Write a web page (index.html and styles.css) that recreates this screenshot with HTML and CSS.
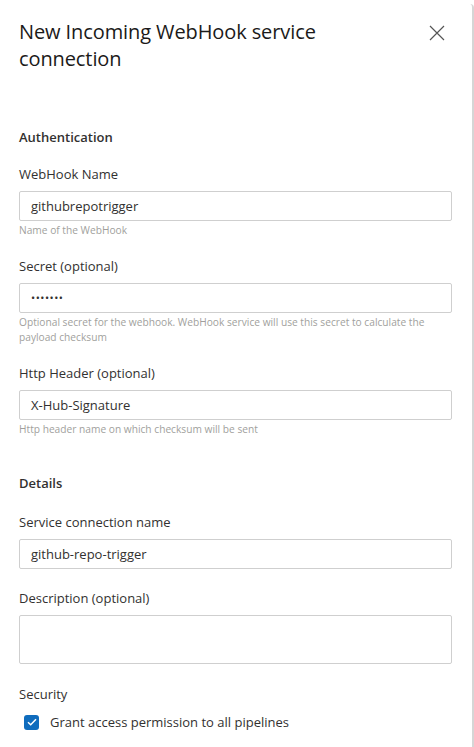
FILE: index.html
```html
<!DOCTYPE html>
<html>
<head>
<meta charset="utf-8">
<link rel="stylesheet" href="styles.css">
</head>
<body>
<div class="panel">
  <div class="header">
    <h1 class="title">New Incoming WebHook service connection</h1>
    <button class="close" aria-label="Close">
      <svg width="16" height="16" viewBox="0 0 16 16"><path d="M1 1L15 15M15 1L1 15" stroke="#555" stroke-width="1.2" fill="none"/></svg>
    </button>
  </div>

  <h2 class="section">Authentication</h2>
  <div class="field">
    <label class="label">WebHook Name</label>
    <div class="input">githubrepotrigger</div>
    <div class="help">Name of the WebHook</div>
  </div>
  <div class="field">
    <label class="label">Secret (optional)</label>
    <div class="input dots">•••••••</div>
    <div class="help">Optional secret for the webhook. WebHook service will use this secret to calculate the payload checksum</div>
  </div>
  <div class="field">
    <label class="label">Http Header (optional)</label>
    <div class="input">X-Hub-Signature</div>
    <div class="help">Http header name on which checksum will be sent</div>
  </div>

  <h2 class="section details">Details</h2>
  <div class="field first">
    <label class="label">Service connection name</label>
    <div class="input">github-repo-trigger</div>
  </div>
  <div class="field plain">
    <label class="label">Description (optional)</label>
    <div class="input textarea"></div>
  </div>
  <div class="field security">
    <label class="label">Security</label>
    <div class="check-row">
      <span class="checkbox">
        <svg width="10" height="8" viewBox="0 0 10 8"><path d="M1 4.2L3.7 6.8L9 1.2" stroke="#fff" stroke-width="1.5" fill="none"/></svg>
      </span>
      <span class="check-label">Grant access permission to all pipelines</span>
    </div>
  </div>
</div>
</body>
</html>
```

FILE: styles.css
```css
html, body {
  margin: 0;
  padding: 0;
  background: #ffffff;
}
body {
  font-family: "Open Sans", "Noto Sans", "Liberation Sans", sans-serif;
  color: #323130;
  width: 474px;
  height: 747px;
  overflow: hidden;
}
.panel {
  box-sizing: border-box;
  height: 747px;
  margin-top: 4px;
  padding: 14px 20px 0 19px;
  border-right: 2px solid #d6d6d6;
  border-top-right-radius: 4px;
}
.header {
  display: flex;
  justify-content: space-between;
  align-items: flex-start;
}
.title {
  margin: 0;
  font-size: 20px;
  font-weight: 400;
  line-height: 27px;
  color: #1b1a19;
  width: 340px;
  letter-spacing: -0.1px;
}
.close {
  border: none;
  background: none;
  padding: 0;
  margin: 7px 7px 0 0;
  width: 16px;
  height: 16px;
  display: flex;
}
.section {
  margin: 56px 0 0 0;
  font-size: 13px;
  font-weight: 600;
  line-height: 18px;
  color: #323130;
}
.section.details {
  margin-top: 37px;
}
.field {
  margin-top: 19px;
}
.field.first {
  margin-top: 21px;
}
.field.plain {
  margin-top: 20px;
}
.field.security {
  margin-top: 21px;
}
.label {
  display: block;
  font-size: 13px;
  line-height: 18px;
  color: #323130;
}
.input {
  box-sizing: border-box;
  margin-top: 8px;
  height: 30px;
  border: 1px solid #cfcfcf;
  border-radius: 2px;
  padding: 0 11px;
  font-size: 13px;
  line-height: 28px;
  color: #323130;
}
.input.dots {
  font-size: 11px;
  letter-spacing: 0.5px;
}
.input.textarea {
  height: 49px;
}
.help {
  margin-top: 2px;
  font-size: 10.2px;
  line-height: 15px;
  color: #a19f9d;
}
.check-row {
  display: flex;
  align-items: center;
  margin-top: 10px;
  padding-left: 5px;
}
.checkbox {
  width: 15px;
  height: 15px;
  border-radius: 3px;
  background: #0f6cbd;
  display: flex;
  align-items: center;
  justify-content: center;
  margin-right: 11px;
}
.check-label {
  font-size: 13px;
  line-height: 18px;
  color: #323130;
}
```
